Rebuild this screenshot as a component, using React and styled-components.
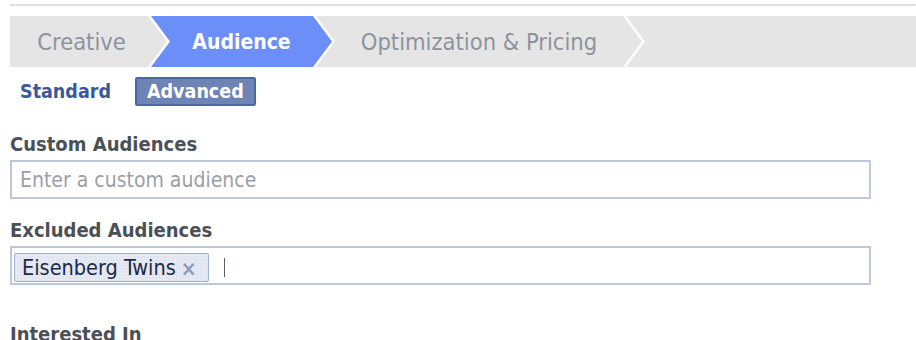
import React from 'react';
import styled, { createGlobalStyle } from 'styled-components';

const GlobalStyle = createGlobalStyle`
  html, body {
    margin: 0;
    padding: 0;
    background: #ffffff;
  }
  body {
    font-family: "DejaVu Sans Condensed", "DejaVu Sans", sans-serif;
    overflow: hidden;
  }
`;

const Page = styled.div`
  width: 916px;
  height: 340px;
  box-sizing: border-box;
  padding: 4px 45px 0 10px;
  overflow: hidden;
`;

const Rule = styled.div`
  height: 2px;
  margin-right: -45px;
  background: repeating-linear-gradient(90deg, #d3d7de 0 1px, #eaecf0 1px 2px);
`;

const StepBar = styled.div`
  display: flex;
  height: 51px;
  margin: 10px -45px 0 0;
  background: #ffffff;
`;

const DEPTH = 19;
const GAP = 3;

const Step = styled.div`
  flex: ${p => (p.$fill ? '1' : 'none')};
  width: ${p => (p.$width ? `${p.$width}px` : 'auto')};
  margin-left: ${p => (p.$first ? 0 : `${GAP - DEPTH}px`)};
  box-sizing: border-box;
  padding-right: ${p => p.$shift || 0}px;
  display: flex;
  align-items: center;
  justify-content: center;
  background: ${p => (p.$active ? '#6b8ef8' : '#e5e5e5')};
  color: ${p => (p.$active ? '#ffffff' : '#8d939d')};
  font-size: ${p => (p.$active ? '21px' : '23.5px')};
  font-weight: ${p => (p.$active ? 700 : 400)};
  white-space: nowrap;
  clip-path: ${p => {
    const notch = p.$first ? '0 50%' : `${DEPTH}px 50%`;
    if (p.$fill) return `polygon(0 0, 100% 0, 100% 100%, 0 100%, ${notch})`;
    return `polygon(0 0, calc(100% - ${DEPTH}px) 0, 100% 50%, calc(100% - ${DEPTH}px) 100%, 0 100%, ${notch})`;
  }};
`;

const ModeRow = styled.div`
  display: flex;
  gap: 12px;
  margin: 10px 0 0 -2px;
`;

const ModeTab = styled.div`
  height: 29px;
  box-sizing: border-box;
  padding: 0 10px;
  display: flex;
  align-items: center;
  font-size: 19.5px;
  font-weight: 700;
  border: 2px solid ${p => (p.$active ? '#4c67a1' : 'transparent')};
  border-radius: 2px;
  background: ${p => (p.$active ? '#6d84b4' : 'transparent')};
  color: ${p => (p.$active ? '#ffffff' : '#3b5998')};
`;

const Label = styled.div`
  margin: ${p => p.$top}px 0 4px;
  font-size: 20px;
  line-height: 24px;
  font-weight: 700;
  color: #4b4f56;
`;

const Field = styled.div`
  height: 39px;
  box-sizing: border-box;
  border: 2px solid #bec8d8;
  display: flex;
  align-items: center;
  gap: 15px;
  padding: ${p => (p.$tokens ? '5px 0 1px 2px' : '0 8px')};
  background: #ffffff;
`;

const Placeholder = styled.span`
  font-size: 21px;
  color: #9ba0a8;
`;

const Token = styled.span`
  height: 29px;
  box-sizing: border-box;
  display: inline-flex;
  align-items: center;
  gap: 5px;
  padding: 0 11px 0 7px;
  border: 1px solid #9fb1d6;
  border-radius: 2px;
  background-color: #e1e6f0;
  background-image: radial-gradient(#f1f3f8 0.6px, transparent 0.8px);
  background-size: 3px 3px;
  color: #1c2a47;
  font-size: 21.5px;
`;

const Remove = styled.span`
  font-size: 21px;
  font-weight: 700;
  color: #8e9bbb;
  line-height: 1;
  padding-top: 3px;
`;

const Caret = styled.span`
  width: 1px;
  height: 19px;
  background: #5b5f66;
`;

export default function App() {
  return (
    <>
      <GlobalStyle />
      <Page>
        <Rule />
        <StepBar>
          <Step $first $width={157} $shift={14}>Creative</Step>
          <Step $active $width={181}>Audience</Step>
          <Step $width={326}>Optimization &amp; Pricing</Step>
          <Step $fill />
        </StepBar>
        <ModeRow>
          <ModeTab>Standard</ModeTab>
          <ModeTab $active>Advanced</ModeTab>
        </ModeRow>
        <Label $top={26}>Custom Audiences</Label>
        <Field>
          <Placeholder>Enter a custom audience</Placeholder>
        </Field>
        <Label $top={19}>Excluded Audiences</Label>
        <Field $tokens>
          <Token>
            Eisenberg Twins
            <Remove>×</Remove>
          </Token>
          <Caret />
        </Field>
        <Label $top={37}>Interested In</Label>
      </Page>
    </>
  );
}
